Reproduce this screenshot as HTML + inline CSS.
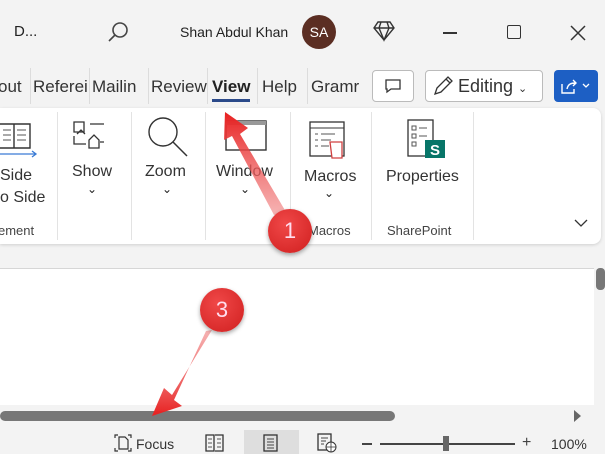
<!DOCTYPE html>
<html><head><meta charset="utf-8"><style>
*{margin:0;padding:0;box-sizing:border-box}
body{width:605px;height:454px;overflow:hidden;background:#f3f3f3;font-family:"Liberation Sans",sans-serif;color:#222;position:relative}
.a{position:absolute;white-space:nowrap}
.tab{font-size:17px;top:77px;color:#333}
.tsep{position:absolute;top:68px;width:1px;height:36px;background:#dcdcdc}
.lbl{font-size:16px;color:#333}
.grp{font-size:13px;color:#444;top:223px}
.sep{position:absolute;top:112px;width:1px;height:128px;background:#e3e3e3}
.circ{position:absolute;width:44px;height:44px;border-radius:50%;background:radial-gradient(circle at 40% 35%,#f04848,#d01f1f);color:#fde;font-size:22px;text-align:center;line-height:44px;box-shadow:0 2px 4px rgba(0,0,0,.35)}
</style></head><body>
<div class="a" style="left:14px;top:23px;font-size:15px">D...</div>
<svg class="a" style="left:106px;top:20px" width="24" height="24"><circle cx="14" cy="10" r="7" fill="none" stroke="#444" stroke-width="1.6"/><line x1="9" y1="15" x2="3" y2="21" stroke="#444" stroke-width="1.6"/></svg>
<div class="a" style="left:180px;top:24px;font-size:14px">Shan Abdul Khan</div>
<div class="a" style="left:302px;top:15px;width:34px;height:34px;border-radius:50%;background:#5b2e23;color:#fff;font-size:14px;text-align:center;line-height:34px">SA</div>
<svg class="a" style="left:372px;top:20px" width="24" height="22"><path d="M6 2h12l4 6-10 12L2 8z M2 8h20 M9 2l-2 6 5 12 5-12-2-6" fill="none" stroke="#333" stroke-width="1.4"/></svg>
<div class="a" style="left:443px;top:32px;width:14px;height:1.5px;background:#333"></div>
<div class="a" style="left:507px;top:25px;width:14px;height:14px;border:1.5px solid #333;border-radius:2px"></div>
<svg class="a" style="left:570px;top:25px" width="16" height="16"><path d="M1 1L15 15M15 1L1 15" stroke="#333" stroke-width="1.5"/></svg>

<div class="a tab" style="left:-2px">out</div>
<div class="tsep" style="left:30px"></div>
<div class="a tab" style="left:33px">Referei</div>
<div class="tsep" style="left:89px"></div>
<div class="a tab" style="left:92px">Mailin</div>
<div class="tsep" style="left:148px"></div>
<div class="a tab" style="left:151px">Review</div>
<div class="tsep" style="left:207px"></div>
<div class="a tab" style="left:212px;font-weight:bold;color:#222">View</div>
<div class="a" style="left:212px;top:99px;width:38px;height:3px;background:#2b4a8a"></div>
<div class="tsep" style="left:257px"></div>
<div class="a tab" style="left:262px">Help</div>
<div class="tsep" style="left:307px"></div>
<div class="a tab" style="left:311px">Gramr</div>
<div class="a" style="left:372px;top:70px;width:42px;height:32px;border:1px solid #bbb;border-radius:4px;background:#fff"></div>
<svg class="a" style="left:384px;top:78px" width="18" height="16"><path d="M2 2h14v9H7l-4 3v-3H2z" fill="none" stroke="#333" stroke-width="1.3"/></svg>
<div class="a" style="left:425px;top:70px;width:118px;height:32px;border:1px solid #bbb;border-radius:4px;background:#fff"></div>
<svg class="a" style="left:432px;top:75px" width="22" height="22"><path d="M3 19l2-6 11-11 4 4-11 11z M14 4l4 4" fill="none" stroke="#333" stroke-width="1.3"/></svg>
<div class="a" style="left:458px;top:76px;font-size:18px;color:#333">Editing <span style="font-size:11px">⌄</span></div>
<div class="a" style="left:554px;top:70px;width:44px;height:32px;border-radius:4px;background:#1d5fc4"></div>
<svg class="a" style="left:560px;top:77px" width="34" height="18"><path d="M2 7v9h12v-4 M7 12c1-5 4-6 9-6M13 3l3 3-3 3" fill="none" stroke="#fff" stroke-width="1.4"/><path d="M23 7l3 3 3-3" fill="none" stroke="#fff" stroke-width="1.3"/></svg>

<div class="a" style="left:0;top:108px;width:601px;height:136px;background:#fff;border-radius:0 8px 8px 0;box-shadow:0 1px 3px rgba(0,0,0,.15)"></div>
<div class="sep" style="left:57px"></div><div class="sep" style="left:131px"></div><div class="sep" style="left:205px"></div><div class="sep" style="left:290px"></div><div class="sep" style="left:371px"></div><div class="sep" style="left:473px"></div>
<svg class="a" style="left:0;top:122px" width="40" height="36"><path d="M0 2h14v24H0 M14 2h16v24H14" fill="none" stroke="#333" stroke-width="1.4"/><path d="M3 8h8M3 13h8M3 18h8M17 8h9M17 13h9M17 18h9" stroke="#555"/><path d="M0 32h36M32 29l4 3-4 3" fill="none" stroke="#3a7bd5" stroke-width="1.3"/></svg>
<div class="a lbl" style="left:0;top:165px;line-height:22px">Side<br>o Side</div>
<div class="a grp" style="left:-2px">ement</div>
<svg class="a" style="left:72px;top:118px" width="38" height="32"><path d="M2 4h10v10H2z M18 6h14 M5 16l4-4 4 4 M17 30V22l5-5 5 5v8z M2 18v8h12 M28 24h4" fill="none" stroke="#333" stroke-width="1.3"/></svg>
<div class="a lbl" style="left:72px;top:163px">Show</div><div class="a" style="left:87px;top:182px;font-size:12px">⌄</div>
<svg class="a" style="left:145px;top:115px" width="46" height="44"><circle cx="18" cy="17" r="14" fill="none" stroke="#333" stroke-width="1.4"/><line x1="28" y1="27" x2="42" y2="41" stroke="#333" stroke-width="1.5"/></svg>
<div class="a lbl" style="left:145px;top:163px">Zoom</div><div class="a" style="left:162px;top:182px;font-size:12px">⌄</div>
<svg class="a" style="left:225px;top:120px" width="44" height="32"><rect x="1" y="1" width="40" height="29" fill="none" stroke="#333" stroke-width="1.4"/><rect x="1" y="1" width="40" height="4" fill="#999"/></svg>
<div class="a lbl" style="left:216px;top:163px">Window</div><div class="a" style="left:240px;top:182px;font-size:12px">⌄</div>
<svg class="a" style="left:308px;top:120px" width="40" height="40"><rect x="2" y="2" width="34" height="34" fill="none" stroke="#333" stroke-width="1.3"/><line x1="2" y1="8" x2="36" y2="8" stroke="#333"/><path d="M7 14h3M13 14h14M7 20h3M13 20h10M7 26h3M13 26h8" stroke="#555"/><path d="M22 22h12v16H24z" fill="#fff" stroke="#d04040" stroke-width="1.3"/></svg>
<div class="a lbl" style="left:304px;top:168px">Macros</div><div class="a" style="left:324px;top:186px;font-size:12px">⌄</div>
<div class="a grp" style="left:308px">Macros</div>
<svg class="a" style="left:405px;top:118px" width="40" height="42"><rect x="3" y="2" width="25" height="36" fill="none" stroke="#333" stroke-width="1.3"/><path d="M7 8h4v4H7zM14 10h8M7 16h4v4H7zM14 18h8M7 24h4v4H7z" fill="none" stroke="#555"/><rect x="20" y="22" width="20" height="18" fill="#077568"/><text x="25" y="37" font-size="15" font-weight="bold" fill="#fff" font-family="Liberation Sans">S</text></svg>
<div class="a lbl" style="left:386px;top:168px">Properties</div>
<div class="a grp" style="left:387px">SharePoint</div>
<svg class="a" style="left:573px;top:217px" width="16" height="12"><path d="M2 3l6 6 6-6" fill="none" stroke="#333" stroke-width="1.3"/></svg>

<div class="a" style="left:0;top:268px;width:594px;height:137px;background:#fff;border-top:1px solid #d6d6d6"></div>
<div class="a" style="left:595px;top:268px;width:10px;height:140px;background:#f3f3f3"></div>
<div class="a" style="left:596px;top:268px;width:9px;height:22px;background:#777;border-radius:4px"></div>
<div class="a" style="left:0;top:411px;width:395px;height:10px;background:#777;border-radius:5px"></div>
<svg class="a" style="left:572px;top:409px" width="10" height="14"><path d="M2 1l7 6-7 6z" fill="#666"/></svg>

<svg class="a" style="left:113px;top:433px" width="20" height="20"><path d="M2 5V2h3M15 2h3v3M2 15v3h3M18 15v3h-3" fill="none" stroke="#333" stroke-width="1.2"/><path d="M6 4h6l3 3v9H6z" fill="none" stroke="#333" stroke-width="1.2"/></svg>
<div class="a" style="left:136px;top:436px;font-size:14px;color:#333">Focus</div>
<svg class="a" style="left:205px;top:434px" width="20" height="18"><path d="M1 1h8v16H1zM10 1h8v16h-8" fill="none" stroke="#333" stroke-width="1.3"/><path d="M3 5h4M3 9h4M3 13h4M12 5h4M12 9h4M12 13h4" stroke="#555"/></svg>
<div class="a" style="left:244px;top:430px;width:55px;height:24px;background:#dedede"></div>
<svg class="a" style="left:263px;top:434px" width="16" height="18"><rect x="1" y="1" width="13" height="16" fill="none" stroke="#333" stroke-width="1.3"/><path d="M4 5h7M4 8h7M4 11h7M4 14h7" stroke="#444"/></svg>
<svg class="a" style="left:317px;top:433px" width="20" height="20"><rect x="1" y="1" width="13" height="16" fill="none" stroke="#333" stroke-width="1.3"/><path d="M4 5h7M4 8h5M4 11h3" stroke="#444"/><circle cx="14" cy="14" r="5" fill="#fff" stroke="#333"/><path d="M9 14h10M14 9v10" stroke="#333" stroke-width=".8"/></svg>
<div class="a" style="left:362px;top:443px;width:10px;height:1.5px;background:#444"></div>
<div class="a" style="left:380px;top:443px;width:135px;height:1.5px;background:#444"></div>
<div class="a" style="left:443px;top:436px;width:6px;height:15px;background:#666"></div>
<div class="a" style="left:522px;top:434px;font-size:16px;color:#444">+</div>
<div class="a" style="left:551px;top:436px;font-size:14px;color:#333">100%</div>

<svg class="a" style="left:0;top:0" width="605" height="454">
<defs><linearGradient id="g1" x1="0" y1="1" x2="0" y2="0"><stop offset="0" stop-color="#f08080" stop-opacity=".6"/><stop offset="1" stop-color="#e82020"/></linearGradient>
<linearGradient id="g3" x1="0" y1="0" x2="0" y2="1"><stop offset="0" stop-color="#f08080" stop-opacity=".6"/><stop offset="1" stop-color="#e82020"/></linearGradient></defs>
<path d="M286 212 L240 134 L248 128 L225 112 L224 140 L232 136 L274 215 Z" fill="url(#g1)"/>
<path d="M212 330 L172 395 L164 388 L152 416 L182 406 L174 400 L206 331 Z" fill="url(#g3)"/>
</svg>
<div class="circ" style="left:268px;top:209px">1</div>
<div class="circ" style="left:200px;top:288px">3</div>
</body></html>
